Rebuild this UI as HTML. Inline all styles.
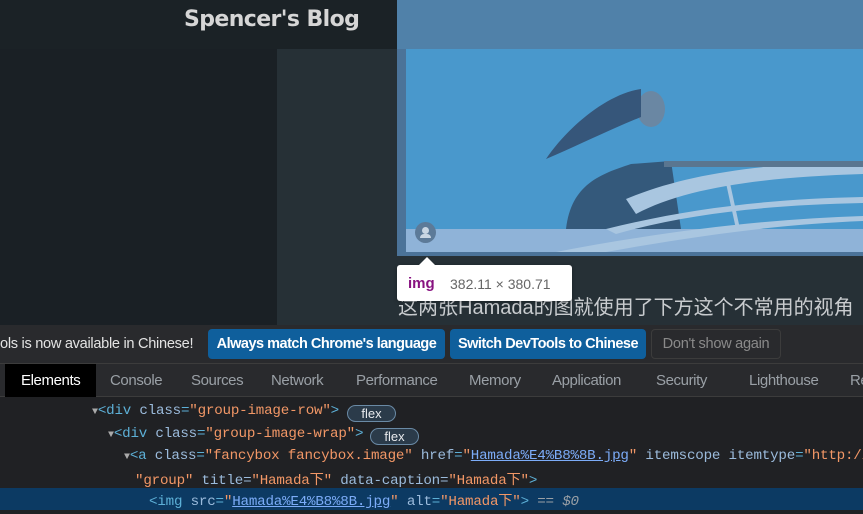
<!DOCTYPE html>
<html><head><meta charset="utf-8"><style>
*{margin:0;padding:0;box-sizing:border-box}
body{width:863px;height:514px;overflow:hidden;background:#263036;font-family:"Liberation Sans","Noto Sans CJK SC",sans-serif;position:relative}
.abs{position:absolute}
.mono{font-family:"Liberation Mono","DejaVu Sans Mono",monospace;font-size:14.2px;white-space:nowrap;letter-spacing:-0.2px}
</style></head><body>
<div class="abs" style="left:0;top:0;width:863px;height:49px;background:#1b2226"></div>
<div class="abs" style="left:0;top:49px;width:277px;height:280px;background:#1a2025"></div>
<div class="abs" style="left:184px;top:7px;font-size:22px;font-weight:bold;color:#d6d6d6;font-family:'DejaVu Sans',sans-serif;letter-spacing:-0.6px">Spencer's Blog</div>
<div class="abs" style="left:397px;top:0;width:466px;height:256px;background:#4b7399"></div>
<div class="abs" style="left:397px;top:0;width:466px;height:49px;background:#5081a9"></div>
<div class="abs" style="left:406px;top:49px;width:457px;height:203px;background:#4998cc"></div>
<div class="abs" style="left:406px;top:229px;width:457px;height:23px;background:#8fb3d8"></div>
<svg class="abs" style="left:406px;top:49px" width="457" height="203" viewBox="0 0 457 203">
<path d="M160 180 C165 135 195 125 225 115 L265 112 L275 180 Z" fill="#34597b"/>
<ellipse cx="245" cy="60" rx="14" ry="18" fill="#6a87a3"/>
<path d="M235 40 C200 45 160 80 140 110 C175 95 205 80 235 68 Z" fill="#36567a"/>
<path d="M220 150 C280 125 350 115 457 112 L457 125 C360 128 280 138 230 165 Z" fill="#a9c6e0"/>
<path d="M200 180 C280 160 360 150 457 148 L457 154 C360 156 280 165 210 185 Z" fill="#a9c6e0"/>
<path d="M150 203 C260 182 360 170 457 167 L457 172 C380 175 300 185 200 203 Z" fill="#a9c6e0"/>
<rect x="258" y="112" width="199" height="6" fill="#5a7690"/>
<path d="M318 125 L330 180 L334 180 L322 125 Z" fill="#a9c6e0"/>
</svg>
<div class="abs" style="left:415px;top:222px;width:21px;height:21px;border-radius:50%;background:#5c7a98"></div>
<div class="abs" style="left:422px;top:227px;width:7px;height:7px;border-radius:50%;background:#c9d6e3"></div>
<div class="abs" style="left:420px;top:234px;width:11px;height:4px;border-radius:4px 4px 0 0;background:#c9d6e3"></div>
<div class="abs" style="left:398px;top:291px;font-size:20px;color:#c9cccf;white-space:nowrap">这两张Hamada的图就使用了下方这个不常用的视角</div>
<div class="abs" style="left:397px;top:265px;width:175px;height:36px;background:#fff;border-radius:3px;box-shadow:0 1px 4px rgba(0,0,0,.3)"></div>
<div class="abs" style="left:419px;top:257px;width:0;height:0;border-left:8px solid transparent;border-right:8px solid transparent;border-bottom:8px solid #fff"></div>
<div class="abs" style="left:408px;top:275px;font-size:15px;font-weight:bold;color:#881280">img</div>
<div class="abs" style="left:450px;top:276px;font-size:14px;color:#666">382.11 × 380.71</div>
<div class="abs" style="left:0;top:325px;width:863px;height:189px;background:#202124"></div>
<div class="abs" style="left:0;top:325px;width:863px;height:39px;background:#292a2d;border-bottom:1px solid #3c3c3c"></div>
<div class="abs" style="left:0;top:336px;font-size:14.6px;color:#e3e3e3;white-space:nowrap;letter-spacing:-0.3px">ols is now available in Chinese!</div>
<div class="abs" style="left:208px;top:329px;width:237px;height:30px;background:#0f5f9c;border-radius:4px;color:#fff;font-size:14.5px;font-weight:bold;line-height:30px;text-align:center;letter-spacing:-0.5px;white-space:nowrap">Always match Chrome's language</div>
<div class="abs" style="left:450px;top:329px;width:196px;height:30px;background:#0f5f9c;border-radius:4px;color:#fff;font-size:14.5px;font-weight:bold;line-height:30px;text-align:center;letter-spacing:-0.5px;white-space:nowrap">Switch DevTools to Chinese</div>
<div class="abs" style="left:651px;top:329px;width:130px;height:30px;border:1px solid #3c3c3c;border-radius:4px;color:#8a8a8a;font-size:14.6px;line-height:28px;text-align:center;letter-spacing:-0.3px">Don't show again</div>
<div class="abs" style="left:0;top:364px;width:863px;height:33px;background:#292a2d;border-bottom:1px solid #3c3c3c"></div>
<div class="abs" style="left:5px;top:364px;width:91px;height:33px;background:#000"></div>
<div class="abs" style="top:372px;font-size:15px;color:#9aa0a6;white-space:nowrap;letter-spacing:-0.4px;left:0;width:900px">
<span class="abs" style="left:21px;color:#fff">Elements</span>
<span class="abs" style="left:110px">Console</span>
<span class="abs" style="left:191px">Sources</span>
<span class="abs" style="left:271px">Network</span>
<span class="abs" style="left:356px">Performance</span>
<span class="abs" style="left:469px">Memory</span>
<span class="abs" style="left:552px">Application</span>
<span class="abs" style="left:656px">Security</span>
<span class="abs" style="left:749px">Lighthouse</span>
<span class="abs" style="left:850px">Re</span>
</div>
<div class="abs" style="left:0;top:488px;width:863px;height:22px;background:#0c3a63"></div>
<div class="abs mono" style="left:92px;top:403px;color:#5db0d7"><span style="color:#aaa;font-size:10px">▼</span>&lt;div <span style="color:#9bbbdc">class</span>=<span style="color:#f29766">"group-image-row"</span>&gt;</div>
<div class="abs" style="left:347px;top:405px;width:49px;height:17px;border:1px solid #6a8aa5;border-radius:9px;background:#2b3b4a;color:#e8eaed;font-size:13px;line-height:15px;text-align:center">flex</div>
<div class="abs mono" style="left:108px;top:426px;color:#5db0d7"><span style="color:#aaa;font-size:10px">▼</span>&lt;div <span style="color:#9bbbdc">class</span>=<span style="color:#f29766">"group-image-wrap"</span>&gt;</div>
<div class="abs" style="left:370px;top:428px;width:49px;height:17px;border:1px solid #6a8aa5;border-radius:9px;background:#2b3b4a;color:#e8eaed;font-size:13px;line-height:15px;text-align:center">flex</div>
<div class="abs mono" style="left:124px;top:448px;color:#5db0d7"><span style="color:#aaa;font-size:10px">▼</span>&lt;a <span style="color:#9bbbdc">class</span>=<span style="color:#f29766">"fancybox fancybox.image"</span> <span style="color:#9bbbdc">href</span>=<span style="color:#f29766">"</span><span style="color:#7cacf8;text-decoration:underline">Hamada%E4%B8%8B.jpg</span><span style="color:#f29766">"</span> <span style="color:#9bbbdc">itemscope itemtype</span>=<span style="color:#f29766">"http://</span></div>
<div class="abs mono" style="left:135px;top:469px;color:#9bbbdc"><span style="color:#f29766">"group"</span> title=<span style="color:#f29766">"Hamada下"</span> data-caption=<span style="color:#f29766">"Hamada下"</span><span style="color:#5db0d7">&gt;</span></div>
<div class="abs mono" style="left:149px;top:490px;color:#5db0d7">&lt;img <span style="color:#9bbbdc">src</span>=<span style="color:#f29766">"</span><span style="color:#7cacf8;text-decoration:underline">Hamada%E4%B8%8B.jpg</span><span style="color:#f29766">"</span> <span style="color:#9bbbdc">alt</span>=<span style="color:#f29766">"Hamada下"</span>&gt; <span style="color:#9aa0a6">== <i>$0</i></span></div>
</body></html>
